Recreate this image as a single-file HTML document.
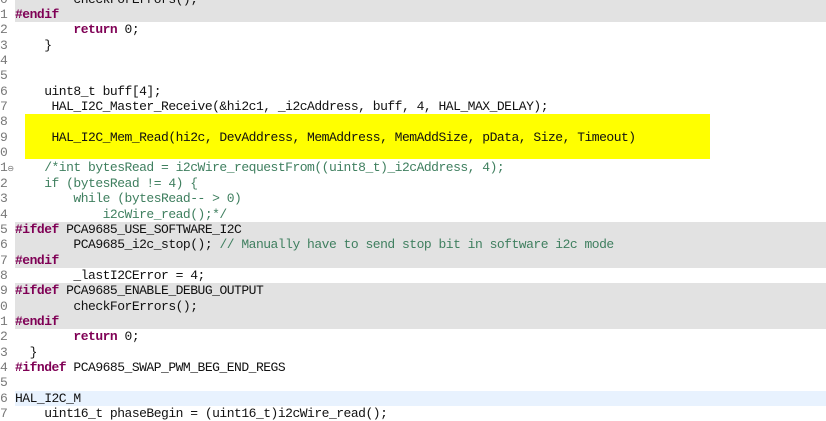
<!DOCTYPE html>
<html><head><style>
html,body{margin:0;padding:0;background:#fff;width:826px;height:419px;overflow:hidden}
#c{position:absolute;left:0;top:-8.3px;width:826px}
.l{position:relative;height:15.35px;line-height:15.35px;font-family:"Liberation Mono",monospace;font-size:13px;letter-spacing:-0.5px;white-space:pre;color:#111}
.n{position:absolute;left:0;width:10px;color:#787878}
.t{position:absolute;left:15px;right:0;top:0;height:15.35px}
.g .t{background:#e2e2e2}
.b .t{background:#e8f2fe}
.k{color:#7f0055;font-weight:bold}
.c{color:#3f7f5f}
#y{position:absolute;left:25px;top:114px;width:685px;height:45px;background:#ffff00}
</style></head><body>
<div id="y"></div>
<div id="c">
<div class="l g"><span class="n">0</span><span class="t">        checkForErrors();</span></div>
<div class="l g"><span class="n">1</span><span class="t"><span class="k">#endif</span></span></div>
<div class="l"><span class="n">2</span><span class="t">        <span class="k">return</span> 0;</span></div>
<div class="l"><span class="n">3</span><span class="t">    }</span></div>
<div class="l"><span class="n">4</span><span class="t"></span></div>
<div class="l"><span class="n">5</span><span class="t"></span></div>
<div class="l"><span class="n">6</span><span class="t">    uint8_t buff[4];</span></div>
<div class="l"><span class="n">7</span><span class="t">     HAL_I2C_Master_Receive(&amp;hi2c1, _i2cAddress, buff, 4, HAL_MAX_DELAY);</span></div>
<div class="l"><span class="n">8</span><span class="t"></span></div>
<div class="l"><span class="n">9</span><span class="t">     HAL_I2C_Mem_Read(hi2c, DevAddress, MemAddress, MemAddSize, pData, Size, Timeout)</span></div>
<div class="l"><span class="n">0</span><span class="t"></span></div>
<div class="l"><span class="n">1<span style="font-size:8px">⊖</span></span><span class="t c">    /*int bytesRead = i2cWire_requestFrom((uint8_t)_i2cAddress, 4);</span></div>
<div class="l"><span class="n">2</span><span class="t c">    if (bytesRead != 4) {</span></div>
<div class="l"><span class="n">3</span><span class="t c">        while (bytesRead-- &gt; 0)</span></div>
<div class="l"><span class="n">4</span><span class="t c">            i2cWire_read();*/</span></div>
<div class="l g"><span class="n">5</span><span class="t"><span class="k">#ifdef</span> PCA9685_USE_SOFTWARE_I2C</span></div>
<div class="l g"><span class="n">6</span><span class="t">        PCA9685_i2c_stop(); <span class="c">// Manually have to send stop bit in software i2c mode</span></span></div>
<div class="l g"><span class="n">7</span><span class="t"><span class="k">#endif</span></span></div>
<div class="l"><span class="n">8</span><span class="t">        _lastI2CError = 4;</span></div>
<div class="l g"><span class="n">9</span><span class="t"><span class="k">#ifdef</span> PCA9685_ENABLE_DEBUG_OUTPUT</span></div>
<div class="l g"><span class="n">0</span><span class="t">        checkForErrors();</span></div>
<div class="l g"><span class="n">1</span><span class="t"><span class="k">#endif</span></span></div>
<div class="l"><span class="n">2</span><span class="t">        <span class="k">return</span> 0;</span></div>
<div class="l"><span class="n">3</span><span class="t">  }</span></div>
<div class="l"><span class="n">4</span><span class="t"><span class="k">#ifndef</span> PCA9685_SWAP_PWM_BEG_END_REGS</span></div>
<div class="l"><span class="n">5</span><span class="t"></span></div>
<div class="l b"><span class="n">6</span><span class="t">HAL_I2C_M</span></div>
<div class="l"><span class="n">7</span><span class="t">    uint16_t phaseBegin = (uint16_t)i2cWire_read();</span></div>
</div>
</body></html>
